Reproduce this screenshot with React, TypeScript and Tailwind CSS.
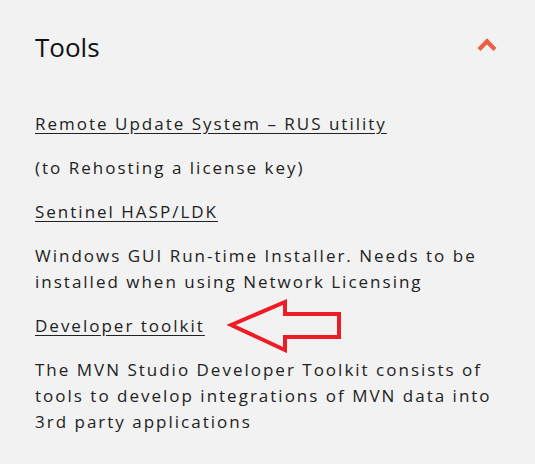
export default function App() {
  const body = "text-[17px] leading-[26px] tracking-[2px] text-[#222]";
  return (
    <div className="min-h-screen w-full bg-[#f2f2f2] [font-family:'Open_Sans',sans-serif]">
      <section className="px-[35px] pt-[29px]">
        <div className="flex items-center justify-between">
          <h2 className="text-[26px] leading-[36px] font-normal text-[#111]">Tools</h2>
          <svg width="20" height="15" viewBox="0 0 20 15" className="mr-[3px] -mt-[6px]">
            <polyline points="2,12.5 10,4.5 18,12.5" fill="none" stroke="#ea6148" strokeWidth="4.5" />
          </svg>
        </div>

        <div className={`mt-[46px] flex flex-col gap-[18px] ${body}`}>
          <p>
            <a href="#" className="underline underline-offset-[3px]">Remote Update System – RUS utility</a>
          </p>
          <p>(to Rehosting a license key)</p>
          <p>
            <a href="#" className="underline underline-offset-[3px]">Sentinel HASP/LDK</a>
          </p>
          <p>Windows GUI Run-time Installer. Needs to be installed when using Network Licensing</p>
          <div className="flex items-center">
            <a href="#" className="underline underline-offset-[3px]">Developer toolkit</a>
            <svg width="116" height="54" viewBox="0 0 116 54" className="ml-[22px] -my-[14px] shrink-0">
              <polygon
                points="4,26 58,3 58,15 112,15 112,38 58,38 58,51"
                fill="none"
                stroke="#ee1c25"
                strokeWidth="4"
                strokeLinejoin="miter"
              />
            </svg>
          </div>
          <p>
            The MVN Studio Developer Toolkit consists of tools to develop integrations of MVN data into 3rd party applications
          </p>
        </div>
      </section>
    </div>
  );
}
